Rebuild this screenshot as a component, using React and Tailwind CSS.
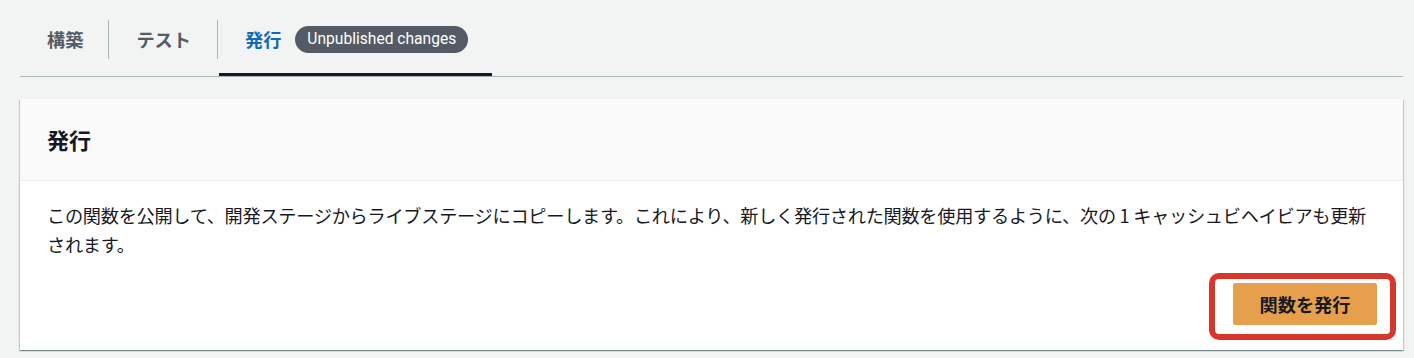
export default function App() {
  const jp = { fontFamily: '"Noto Sans CJK JP", "Noto Sans", sans-serif' };
  return (
    <div className="w-full h-[358px] bg-[#f2f3f3] pl-5 pr-[11px] overflow-hidden" style={jp}>
      {/* Tabs */}
      <div className="flex h-[77px] border-b border-[#aab7b8]">
        <div className="flex items-start pt-[20px]">
          <div className="h-[39px] flex items-center pl-[27px] pr-[25px] text-[18.2px] font-bold text-[#545b64]">構築</div>
        </div>
        <div className="pt-[20px]"><div className="w-px h-[39px] bg-[#aab7b8]" /></div>
        <div className="flex items-start pt-[20px]">
          <div className="h-[39px] flex items-center pl-[27px] pr-[26px] text-[18.2px] font-bold text-[#545b64]">テスト</div>
        </div>
        <div className="pt-[20px]"><div className="w-px h-[39px] bg-[#aab7b8]" /></div>
        <div className="relative flex items-start pt-[20px] ml-px">
          <div className="h-[39px] flex items-center pl-[26px] pr-[24px] gap-[14px]">
            <span className="text-[18.2px] font-bold text-[#0f6cb6]">発行</span>
            <span
              className="h-[27px] px-[12px] rounded-full bg-[#545b64] text-white text-[15.6px] flex items-center"
              style={{ fontFamily: 'Roboto, "Liberation Sans", sans-serif' }}
            >
              Unpublished changes
            </span>
          </div>
          <div className="absolute left-0 right-0 bottom-0 h-[3px] bg-[#16191f]" />
        </div>
      </div>

      {/* Card */}
      <div className="mt-[22px] bg-white shadow-[0_1px_1px_0_rgba(0,28,36,0.3),1px_1px_1px_0_rgba(0,28,36,0.15),-1px_1px_1px_0_rgba(0,28,36,0.15)]">
        <div className="h-[82px] bg-[#fafafa] border-b border-[#eaeded] flex items-center pl-[27px]">
          <h2 className="text-[22px] font-bold text-[#16191f]">発行</h2>
        </div>
        <div className="pt-[20px] pb-[25px] pl-[27px] pr-[26px]">
          <p className="text-[18.2px] leading-[28.6px] tracking-[-0.28px] text-[#16191f]">
            この関数を公開して、開発ステージからライブステージにコピーします。これにより、新しく発行された関数を使用するように、次の 1 キャッシュビヘイビアも更新されます。
          </p>
          <div className="flex justify-end mt-[25px]">
            <div className="relative">
              <button className="w-[144px] h-[42px] rounded-[2px] bg-[#e6a04d] text-[18.2px] font-bold text-[#16191f] flex items-center justify-center">
                関数を発行
              </button>
              <div className="absolute -left-[24px] -top-[10px] -right-[19px] -bottom-[15px] border-[6px] border-[#d5382a] rounded-[10px] pointer-events-none" />
            </div>
          </div>
        </div>
      </div>
    </div>
  );
}
